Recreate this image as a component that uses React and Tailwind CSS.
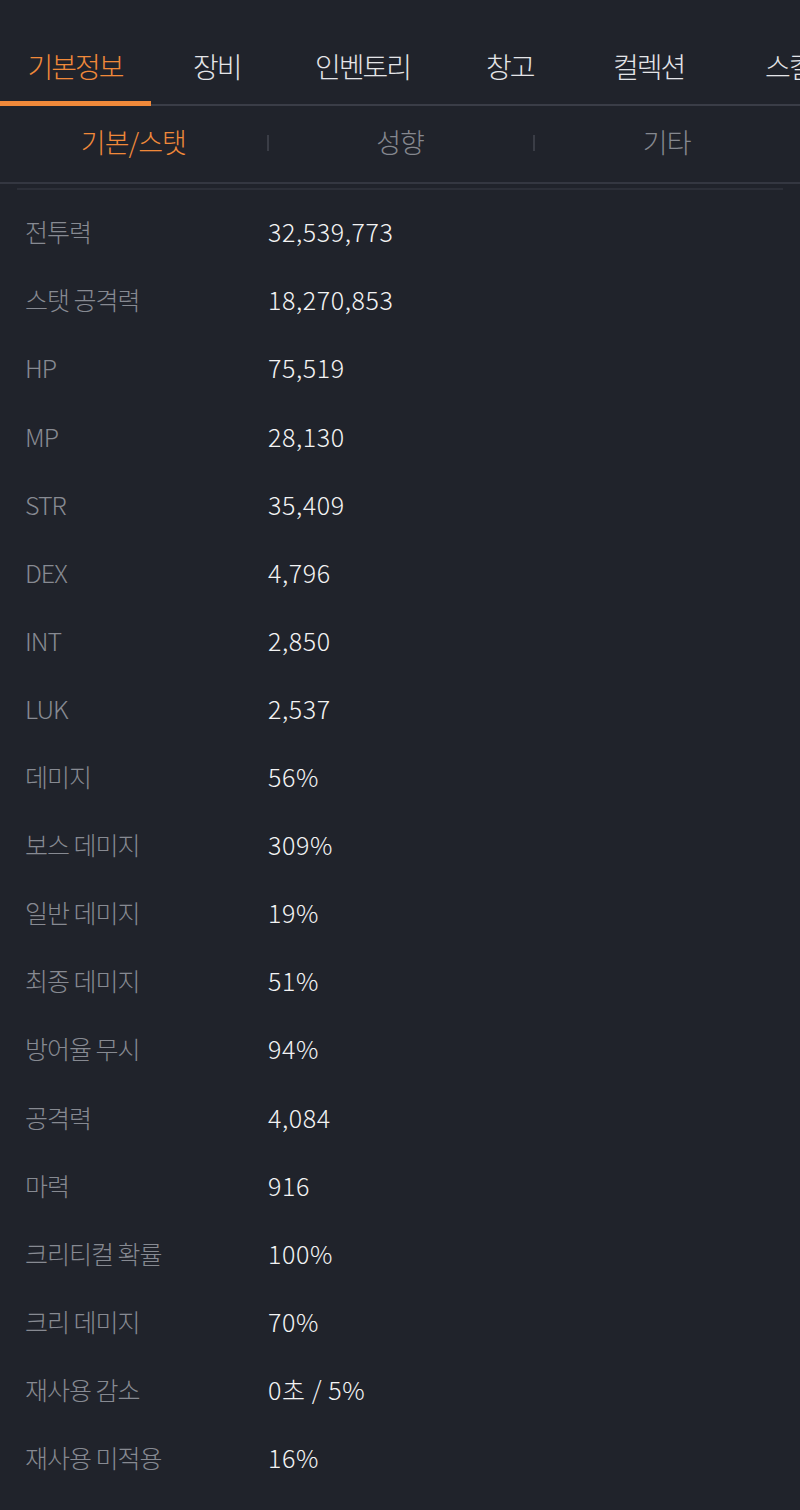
const mainTabs = [
  { label: "기본정보", cls: "w-[150px] text-center text-[#f0893a]" },
  { label: "장비", cls: "ml-[43px] w-[122px]" },
  { label: "인벤토리", cls: "w-[171px]" },
  { label: "창고", cls: "w-[127px]" },
  { label: "컬렉션", cls: "w-[152px]" },
  { label: "스킬", cls: "" },
]

const subTabs = ["기본/스탯", "성향", "기타"]

const stats = [
  ["전투력", "32,539,773"],
  ["스탯 공격력", "18,270,853"],
  ["HP", "75,519"],
  ["MP", "28,130"],
  ["STR", "35,409"],
  ["DEX", "4,796"],
  ["INT", "2,850"],
  ["LUK", "2,537"],
  ["데미지", "56%"],
  ["보스 데미지", "309%"],
  ["일반 데미지", "19%"],
  ["최종 데미지", "51%"],
  ["방어율 무시", "94%"],
  ["공격력", "4,084"],
  ["마력", "916"],
  ["크리티컬 확률", "100%"],
  ["크리 데미지", "70%"],
  ["재사용 감소", "0초 / 5%"],
  ["재사용 미적용", "16%"],
]

export default function App() {
  return (
    <div
      className="w-[800px] h-[1510px] overflow-hidden bg-[#20232b] font-light"
      style={{ fontFamily: '"Noto Sans CJK KR", "Noto Sans", sans-serif' }}
    >
      {/* main tabs */}
      <div className="relative h-[106px] overflow-hidden">
        <div className="flex items-center h-[104px] pt-[28px] whitespace-nowrap text-[28px] tracking-[-2px] text-[#e4e5e8]">
          {mainTabs.map((t) => (
            <div key={t.label} className={`shrink-0 ${t.cls}`}>
              {t.label}
            </div>
          ))}
        </div>
        <div className="absolute left-0 right-0 bottom-0 h-[2px] bg-[#3a3d47]" />
        <div className="absolute left-0 bottom-0 w-[151px] h-[5px] bg-[#f0893a]" />
      </div>

      {/* sub tabs */}
      <div className="flex items-center h-[78px] pb-[3px] border-b-2 border-[#343741]">
        {subTabs.map((t, i) => (
          <div key={t} className="relative flex-1 flex items-center justify-center">
            <span className={`text-[27px] tracking-[-1px] ${i === 0 ? "text-[#f0893a]" : "text-[#85888f]"}`}>{t}</span>
            {i > 0 && (
              <span className="absolute left-0 top-1/2 -translate-y-1/2 w-[2px] h-[16px] bg-[#3a3d46]" />
            )}
          </div>
        ))}
      </div>
      <div className="mx-[17px] mt-[4px] h-[2px] bg-[#2c2f38]" />

      {/* stats */}
      <div className="pt-[8px]">
        {stats.map(([k, v]) => (
          <div key={k} className="grid grid-cols-[243px_1fr] items-center h-[68.1px] pl-[25px]">
            <span className="text-[25px] tracking-[-1px] text-[#878a92]">{k}</span>
            <span className="text-[25px] text-[#f3f3f4] tracking-[0.6px]">{v}</span>
          </div>
        ))}
      </div>
    </div>
  )
}
